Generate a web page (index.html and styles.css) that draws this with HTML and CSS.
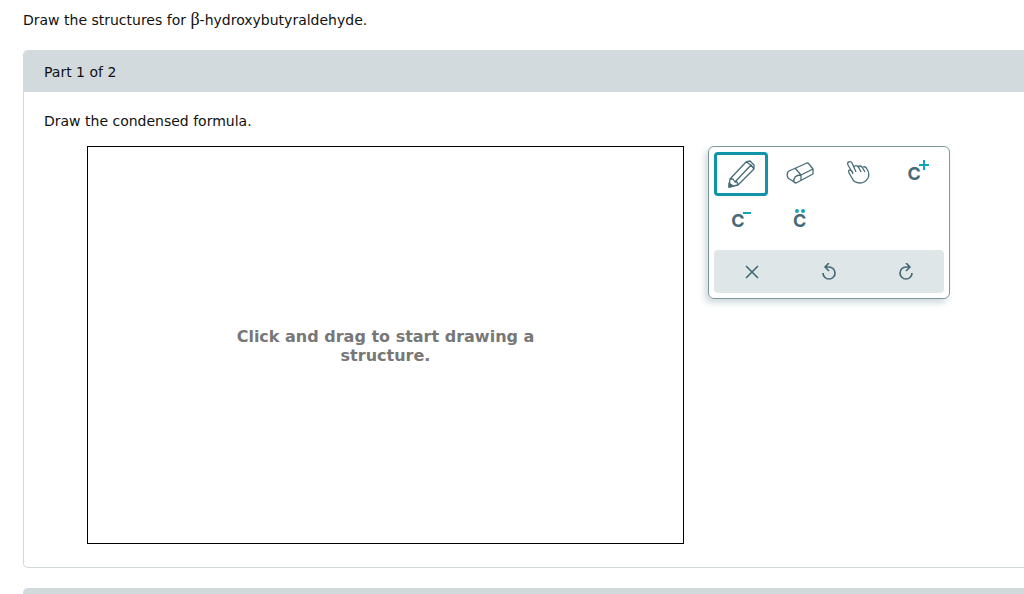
FILE: index.html
```html
<!DOCTYPE html>
<html lang="en">
<head>
    <meta charset="UTF-8">
    <meta name="viewport" content="width=device-width, initial-scale=1.0">
    <title>Draw the structures</title>
    <link rel="stylesheet" href="styles.css">
</head>
<body>
    <p class="question">Draw the structures for <span class="greek">β</span>-hydroxybutyraldehyde.</p>

    <section class="part">
        <h2 class="part-header">Part 1 of 2</h2>
        <div class="part-body">
            <p class="prompt">Draw the condensed formula.</p>
            <div class="editor">
                <div class="canvas">
                    <p class="hint">Click and drag to start drawing a structure.</p>
                </div>
                <div class="toolbox">
                    <div class="tools">
                        <button class="tool selected" aria-label="Pencil">
                            <svg width="30" height="30" viewBox="0 0 30 30">
                                <path d="M3 28l1-8L20 3l4-1 4 4v4L12 26zM4 20l3 0 2 3 2 0 1 3M9 23L25 6M20 3l5 3 3 4"/>
                                <path class="solid" d="M3 28v-4l4 3z"/>
                            </svg>
                        </button>
                        <button class="tool" aria-label="Eraser">
                            <svg width="30" height="30" viewBox="0 0 30 30">
                                <path d="M4 12L22 4q1 0 2 1l4 5v5L11 24q-1 0-2-1l-6-4q-2-5 1-7zM10 9l6 7v5M9 23q-1-7 7-7L28 10"/>
                            </svg>
                        </button>
                        <button class="tool" aria-label="Move">
                            <svg width="30" height="30" viewBox="0 0 30 30">
                                <path d="M9 13L5 6Q4 3 6 3q2-1 3 1l4 9M11 8q1-2 3-1 1 0 2 2l2 4M15 8q2-2 4 0l3 5M20 8q3-1 4 2 3 5 1 9-3 5-8 5-6 0-8-5L6 14q-1-3 1-3 2 0 3 4"/>
                            </svg>
                        </button>
                        <button class="tool" aria-label="Positive charge">
                            <span class="atom charged">C<svg class="mark plus" width="10" height="10" viewBox="0 0 10 10"><path d="M5 0v10M0 5h10"/></svg></span>
                        </button>
                        <button class="tool" aria-label="Negative charge">
                            <span class="atom charged">C<svg class="mark minus" width="8" height="2" viewBox="0 0 8 2"><path d="M0 1h8"/></svg></span>
                        </button>
                        <button class="tool" aria-label="Lone pair">
                            <span class="atom">C<svg class="mark dots" width="12" height="4" viewBox="0 0 12 4"><circle cx="3" cy="2" r="2"/><circle cx="9" cy="2" r="2"/></svg></span>
                        </button>
                    </div>
                    <div class="actions">
                        <button class="action" aria-label="Clear">
                            <svg width="18" height="18" viewBox="0 0 18 18"><path d="M3 3l12 12M15 3L3 15"/></svg>
                        </button>
                        <button class="action" aria-label="Undo">
                            <svg width="18" height="18" viewBox="0 0 18 18"><path d="M3 10a6 6 0 1 0 6-6H5M9 0L5 4l4 4"/></svg>
                        </button>
                        <button class="action" aria-label="Redo">
                            <svg width="18" height="18" viewBox="0 0 18 18"><path d="M15 10a6 6 0 1 1-6-6h4M9 0l4 4-4 4"/></svg>
                        </button>
                    </div>
                </div>
            </div>
        </div>
    </section>

    <section class="part">
        <div class="part-header"></div>
    </section>
</body>
</html>
```
FILE: styles.css
```css
body {
    margin: 0;
    padding: 10px 0 0 23px;
    font-family: Verdana, "DejaVu Sans", sans-serif;
    font-size: 14px;
    line-height: 20px;
    color: #111;
    background-color: #fff;
    overflow-x: hidden;
}
p {
    margin: 0;
}
.greek {
    font-family: "Liberation Serif", serif;
    font-size: 18px;
    line-height: 16px;
}
.part {
    margin-top: 20px;
    border: 1px solid #d0d8da;
    border-right: none;
    border-radius: 5px 0 0 5px;
    overflow: hidden;
}
.part-header {
    margin: 0;
    min-height: 20px;
    padding: 11px 20px 10px;
    font-size: 14px;
    font-weight: normal;
    background-color: #d2dadd;
}
.part-body {
    padding: 19px 20px 23px;
}
.editor {
    display: flex;
    align-items: flex-start;
    gap: 24px;
    margin: 15px 0 0 43px;
}
.canvas {
    box-sizing: border-box;
    display: flex;
    align-items: center;
    justify-content: center;
    flex: 0 1 597px;
    aspect-ratio: 3 / 2;
    border: 1px solid #000;
}
.hint {
    max-width: 320px;
    padding-top: 2px;
    font-size: 16px;
    line-height: 19px;
    font-weight: bold;
    text-align: center;
    color: #777;
}
.toolbox {
    box-sizing: border-box;
    flex: 0 0 242px;
    padding: 5px;
    border: 1px solid #7d989d;
    border-radius: 6px;
    box-shadow: -3px 4px 6px rgba(70, 110, 125, 0.25);
}
.tools {
    display: grid;
    grid-template-columns: repeat(4, 1fr);
    gap: 3px 5px;
}
button {
    display: flex;
    align-items: center;
    justify-content: center;
    padding: 0;
    border: none;
    background: none;
    cursor: pointer;
}
button svg {
    fill: none;
    stroke: #466b78;
    stroke-width: 1.3;
    stroke-linejoin: round;
}
.tool {
    height: 44px;
    border: 3px solid transparent;
    border-radius: 4px;
}
.tool.selected {
    border-color: #1095a8;
}
button .solid {
    fill: #466b78;
}
.atom {
    position: relative;
    font-family: Inter, sans-serif;
    font-size: 18px;
    line-height: 20px;
    font-weight: bold;
    color: #466b78;
}
.charged {
    margin-right: 6px;
}
.atom .mark {
    position: absolute;
    stroke: #12a5b8;
    stroke-width: 2;
}
.atom .plus {
    top: -4px;
    left: 12px;
}
.atom .minus {
    top: 1px;
    left: 12px;
}
.atom .dots {
    top: -2px;
    left: 1px;
    fill: #12a5b8;
    stroke: none;
}
.actions {
    display: grid;
    grid-template-columns: repeat(3, 1fr);
    height: 43px;
    margin-top: 7px;
    border-radius: 4px;
    background-color: #dfe6e8;
}
.action svg {
    stroke-width: 1.7;
}
```
